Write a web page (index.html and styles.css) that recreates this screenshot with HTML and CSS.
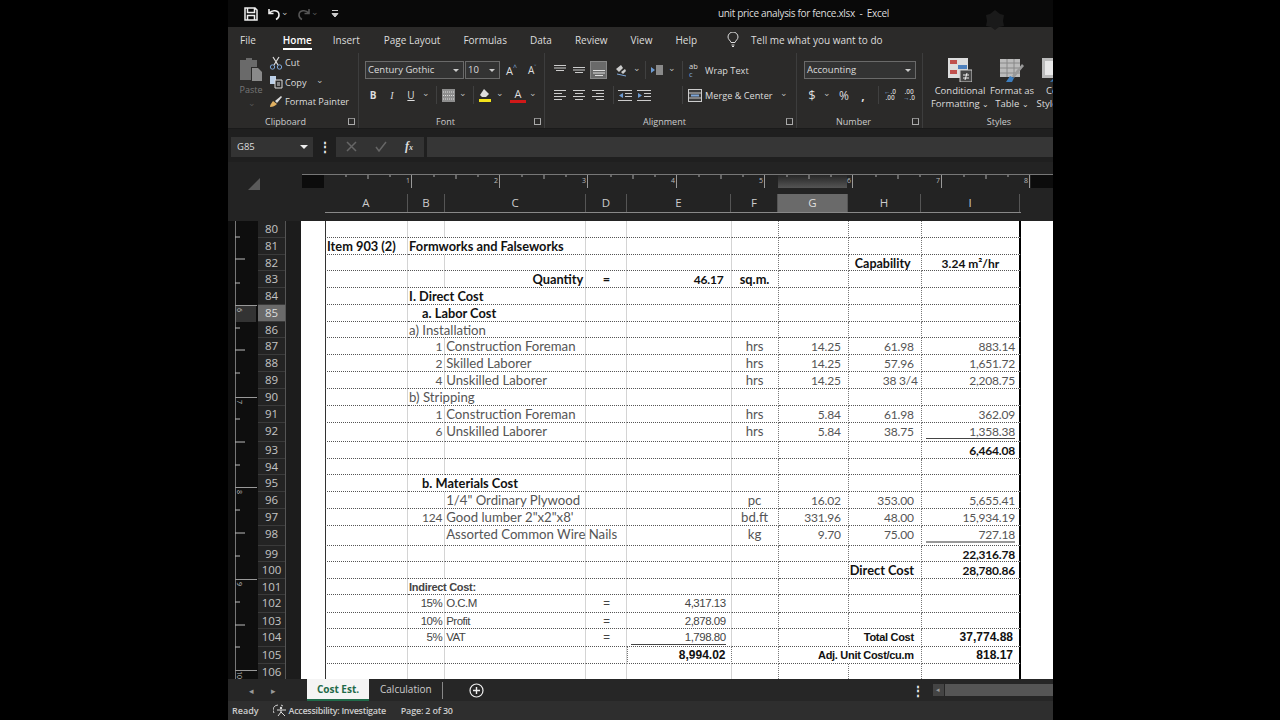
FILE: index.html
```html
<!DOCTYPE html>
<html lang="en">
<head>
    <meta charset="UTF-8">
    <title>unit price analysis for fence.xlsx - Excel</title>
    <link rel="stylesheet" href="styles.css">
</head>
<body>
<div class="window">

    <!-- TITLE BAR -->
    <header class="titlebar">
        <div class="qat">
            <svg class="qi" width="14" height="14" viewBox="0 0 14 14"><path d="M1 1h10l2 2v10H1z M3.500 1.500v4h7v-4 M3.500 13v-4.500h7V13" fill="none" stroke="#eee" stroke-width="1.500"/></svg>
            <svg class="qi undo" width="14" height="14" viewBox="0 0 14 14"><path d="M2 2v4.500h4.500 M2.500 6C5 2.500 12 3 12 8c0 2-1 3.500-3 4.500" fill="none" stroke="#eee" stroke-width="1.600"/></svg>
            <span class="chev">⌄</span>
            <svg class="qi redo" width="14" height="14" viewBox="0 0 14 14"><path d="M12 2v4.500H7.500 M11.500 6C9 2.500 2 3 2 8c0 2 1 3.500 3 4.500" fill="none" stroke="#555" stroke-width="1.600"/></svg>
            <span class="chev dim">⌄</span>
            <svg class="qi more" width="8" height="10" viewBox="0 0 8 10"><path d="M1 1.500h6 M1 4.500h6l-3 3.500z" stroke="#ccc" fill="#ccc"/></svg>
        </div>
        <div class="doc-title">unit price analysis for fence.xlsx&nbsp; - &nbsp;Excel</div>
        <svg class="faint" width="22" height="24" viewBox="0 0 22 24"><path d="M11 2l5 4 4 1-1 6 1 5-5 1-4 3-4-3-5-1 1-5-1-6 4-1z" fill="#1a1a1a"/></svg>
    </header>

    <!-- RIBBON TABS -->
    <nav class="tabs">
        <span>File</span>
        <span class="on">Home</span>
        <span class="ins">Insert</span>
        <span>Page Layout</span>
        <span>Formulas</span>
        <span>Data</span>
        <span>Review</span>
        <span>View</span>
        <span>Help</span>
        <svg class="bulb" width="12" height="15" viewBox="0 0 12 15"><path d="M4 10.500C3.500 8.500 1 7.500 1 5a5 5 0 0 1 10 0c0 2.500-2.500 3.500-3 5.500z M4.500 13h3 M5 14.500h2" fill="none" stroke="#ddd"/></svg>
        <span class="tell">Tell me what you want to do</span>
    </nav>

    <!-- RIBBON -->
    <section class="ribbon">
        <div class="group g-clip">
            <div class="body clip-body">
                <div class="paste">
                    <svg width="24" height="25" viewBox="0 0 24 25"><path d="M1 3h6V1h6v2h5v7h-6v13H1z" fill="#6a6a6a"/><path d="M13 11h6l4 4v9H13z" fill="#8a8a8a"/></svg>
                    <span>Paste</span>
                    <span class="chev dim">⌄</span>
                </div>
                <div class="clip-list">
                    <div class="clip-row">
                        <svg width="14" height="14" viewBox="0 0 14 14"><path d="M4 1l5 8 M10 1L5 9" stroke="#ddd" stroke-width="1.200"/><circle cx="3.500" cy="11" r="2.200" fill="none" stroke="#7ea6d8"/><circle cx="10.500" cy="11" r="2.200" fill="none" stroke="#7ea6d8"/></svg>
                        <span>Cut</span>
                    </div>
                    <div class="clip-row">
                        <svg width="14" height="14" viewBox="0 0 14 14"><path d="M1 1h6v8H1z" fill="#bcd0e8"/><path d="M6 5h7v8H6z" fill="#2b2b2b" stroke="#ddd"/><path d="M8 8h3 M8 10h3" stroke="#ddd"/></svg>
                        <span>Copy</span>
                        <span class="chev">⌄</span>
                    </div>
                    <div class="clip-row">
                        <svg width="14" height="14" viewBox="0 0 14 14"><path d="M1 12c0-3 2-4 3-6l4 3c-2 2-4 3-7 3z" fill="#e0b060"/><path d="M6 6l6-5 1 1-5 6z" fill="#ddd"/></svg>
                        <span>Format Painter</span>
                    </div>
                </div>
            </div>
            <div class="label">Clipboard<i class="launch"></i></div>
        </div>

        <div class="group g-font">
            <div class="body">
                <div class="row1">
                    <div class="combo w-font">Century Gothic<b></b></div>
                    <div class="combo w-size">10<b></b></div>
                    <span class="grow">A<sup>^</sup></span>
                    <span class="shrink">A<sup>˅</sup></span>
                </div>
                <div class="row2">
                    <span class="btn bold">B</span>
                    <span class="btn ital">I</span>
                    <span class="btn under">U</span>
                    <span class="chev">⌄</span>
                    <i class="sep"></i>
                    <span class="btn"><svg width="13" height="13" viewBox="0 0 13 13"><rect width="13" height="13" fill="#8e8e8e"/><path d="M1 3h11 M1 6.500h11 M1 10h11" stroke="#ddd" stroke-dasharray="1 1"/></svg></span>
                    <span class="chev">⌄</span>
                    <i class="sep"></i>
                    <span class="btn"><svg width="14" height="14" viewBox="0 0 14 14"><path d="M6 1l5 5-3 3H4L2 7z" fill="#ddd"/><rect x="1" y="11" width="12" height="3" fill="#f2e21b"/></svg></span>
                    <span class="chev">⌄</span>
                    <span class="btn color-a">A</span>
                    <span class="chev">⌄</span>
                </div>
            </div>
            <div class="label">Font<i class="launch"></i></div>
        </div>

        <div class="group g-align">
            <div class="body">
                <div class="row1 tight">
                    <span class="btn"><svg width="12" height="12" viewBox="0 0 12 12"><path d="M0 1.500h12 M0 4h12 M2 6.500h8" stroke="#ccc"/></svg></span>
                    <span class="btn"><svg width="12" height="12" viewBox="0 0 12 12"><path d="M0 3.500h12 M0 6h12 M2 8.500h8" stroke="#ccc"/></svg></span>
                    <span class="btn selected"><svg width="12" height="12" viewBox="0 0 12 12"><path d="M0 6.500h12 M0 9h12 M2 11.500h8" stroke="#ddd"/></svg></span>
                    <span class="btn orient"><svg width="14" height="13" viewBox="0 0 14 13"><path d="M1 5l5-4 2 3-4 4z M6 8l4-3 1 2-3 3z" fill="#ccc"/><path d="M2 10l9 2" stroke="#7ea6d8"/></svg></span>
                    <span class="chev">⌄</span>
                    <i class="sep s-a"></i>
                    <span class="btn"><svg width="12" height="10" viewBox="0 0 12 10"><path d="M0 2l4 3-4 3z" fill="#6d9bd1"/><path d="M5 0h7v10H5z" fill="#8a8a8a"/></svg></span>
                    <span class="chev">⌄</span>
                    <i class="sep s-b"></i>
                    <span class="btn wrap-ico"><em>ab</em><em>c</em></span>
                    <span class="al-text">Wrap Text</span>
                </div>
                <div class="row2 tight">
                    <span class="btn"><svg width="12" height="10" viewBox="0 0 12 10"><path d="M0 .5h12 M0 3.500h8 M0 6.500h12 M0 9.500h8" stroke="#ccc"/></svg></span>
                    <span class="btn"><svg width="12" height="10" viewBox="0 0 12 10"><path d="M0 .5h12 M2 3.500h8 M0 6.500h12 M2 9.500h8" stroke="#ccc"/></svg></span>
                    <span class="btn"><svg width="12" height="10" viewBox="0 0 12 10"><path d="M0 .5h12 M4 3.500h8 M0 6.500h12 M4 9.500h8" stroke="#ccc"/></svg></span>
                    <i class="sep"></i>
                    <span class="btn"><svg width="14" height="11" viewBox="0 0 14 11"><path d="M0 .5h14 M7 3.500h7 M7 6.500h7 M0 10.500h14" stroke="#ccc"/><path d="M5 3v5L1 5.500z" fill="#6d9bd1"/></svg></span>
                    <span class="btn"><svg width="14" height="11" viewBox="0 0 14 11"><path d="M0 .5h14 M7 3.500h7 M7 6.500h7 M0 10.500h14" stroke="#ccc"/><path d="M1 3v5l4-2.500z" fill="#6d9bd1"/></svg></span>
                    <i class="sep s-c"></i>
                    <span class="btn"><svg width="14" height="13" viewBox="0 0 14 13"><rect x=".5" y=".5" width="13" height="12" fill="#3b3b3b" stroke="#ccc"/><path d="M0 4h14 M0 9h14" stroke="#ccc"/><path d="M3 6.500h8" stroke="#7ea6d8" stroke-width="2"/></svg></span>
                    <span class="al-text">Merge &amp; Center</span>
                    <span class="chev c-m">⌄</span>
                </div>
            </div>
            <div class="label">Alignment<i class="launch"></i></div>
        </div>

        <div class="group g-num">
            <div class="body">
                <div class="row1"><div class="combo w-num">Accounting<b></b></div></div>
                <div class="row2 tight">
                    <span class="btn dollar">$</span>
                    <span class="chev">⌄</span>
                    <span class="btn pct">%</span>
                    <span class="btn comma">,</span>
                    <i class="sep"></i>
                    <span class="btn dec"><em><u>←</u>.0</em><em>.00</em></span>
                    <span class="btn dec"><em>.00</em><em><u>→</u>.0</em></span>
                </div>
            </div>
            <div class="label">Number<i class="launch"></i></div>
        </div>

        <div class="group g-styles">
            <div class="body style-body">
                <div class="style-col c1">
                    <svg width="24" height="24" viewBox="0 0 24 24"><rect width="20" height="20" fill="#ddd"/><path d="M2 2h7v4H2z" fill="#c0504d"/><path d="M10 7h9v4h-9z" fill="#4f81bd"/><path d="M2 12h7v4H2z" fill="#c0504d"/><rect x="12" y="12" width="12" height="12" fill="#444" stroke="#ccc"/><path d="M15 17h6 M15 20h6 M19 15l-2 7" stroke="#eee"/></svg>
                    <span>Conditional</span>
                    <span>Formatting <i class="mini">⌄</i></span>
                </div>
                <div class="style-col c2">
                    <svg width="24" height="24" viewBox="0 0 24 24"><rect y="1" width="20" height="18" fill="#bbb"/><path d="M0 5h20 M0 10h20 M0 15h20 M7 1v18 M14 1v18" stroke="#888"/><path d="M12 18l10-12 2 2-10 12z" fill="#999"/><path d="M10 18l4 2-2 4h-6z" fill="#3d7ebf"/></svg>
                    <span>Format as</span>
                    <span>Table <i class="mini">⌄</i></span>
                </div>
                <div class="style-col c3">
                    <svg width="24" height="24" viewBox="0 0 24 24"><rect width="20" height="20" fill="#bbb"/><rect x="3" y="3" width="14" height="14" fill="#e8e8e8"/><path d="M8 24l6-6 4 4z" fill="#3d7ebf"/></svg>
                    <span>Cell</span>
                    <span>Styles <i class="mini">⌄</i></span>
                </div>
            </div>
            <div class="label">Styles</div>
        </div>
    </section>

    <!-- FORMULA BAR -->
    <div class="formula">
        <div class="namebox">G85<b></b></div>
        <span class="dots">⋮</span>
        <div class="fx-box">
            <svg width="11" height="11" viewBox="0 0 11 11"><path d="M1 1l9 9 M10 1l-9 9" stroke="#666" stroke-width="1.500"/></svg>
            <svg width="12" height="11" viewBox="0 0 12 11"><path d="M1 6l3 4 7-9" fill="none" stroke="#666" stroke-width="1.500"/></svg>
            <span class="fx">f<small>x</small></span>
        </div>
        <div class="input"></div>
    </div>

    <!-- RULER + COLUMN HEADERS -->
    <div class="sheet-head">
        <div class="corner"><i></i></div>
        <div class="head-right">
            <svg class="ruler" width="751" height="16" viewBox="0 0 751 16">
                <defs><linearGradient id="rulerSel" x1="0" y1="0" x2="0" y2="1"><stop offset="0" stop-color="#262626"/><stop offset="1" stop-color="#555"/></linearGradient></defs>
                <rect x="0" y="2" width="22" height="13" fill="#0c0c0c"/>
                <rect x="729" y="2" width="22" height="13" fill="#0c0c0c"/>
                <rect x="476" y="2" width="69" height="13" fill="url(#rulerSel)"/>
                <path d="M0 1.500h751" stroke="#777"/>
                <path d="M44 2v2M66 2v4M88 2v2M132 2v2M154 2v4M176 2v2M220 2v2M242 2v4M264 2v2M309 2v2M331 2v4M353 2v2M397 2v2M419 2v4M441 2v2M485 2v2M507 2v4M529 2v2M574 2v2M596 2v4M618 2v2M662 2v2M684 2v4M706 2v2" stroke="#aaa"/>
                <path d="M109.500 2v13M197.500 2v13M285.500 2v13M374.500 2v13M462.500 2v13M550.500 2v13M639.500 2v13M727.500 2v13" stroke="#999"/>
                <g class="rnum">
                    <text x="104" y="10">1</text><text x="192" y="10">2</text><text x="280" y="10">3</text><text x="369" y="10">4</text>
                    <text x="457" y="10">5</text><text x="545" y="10">6</text><text x="634" y="10">7</text><text x="722" y="10">8</text>
                </g>
            </svg>
            <div class="colheads">
                <span class="a">A</span><span class="b">B</span><span class="c">C</span><span class="d">D</span><span class="e">E</span><span class="f">F</span><span class="g selected">G</span><span class="h">H</span><span class="i">I</span>
            </div>
        </div>
    </div>

    <!-- SHEET -->
    <div class="sheet">
        <svg class="vruler" width="30" height="458" viewBox="0 0 30 458">
            <path d="M7.500 0v458" stroke="#777"/>
            <path d="M7 16h5M7 62h5M7 107h5M7 152h5M7 198h5M7 244h5M7 289h5M7 335h5M7 381h5M7 426h5" stroke="#bbb"/>
            <path d="M7 38h10M7 129h10M7 221h10M7 312h10M7 404h10" stroke="#bbb"/>
            <path d="M7 84.500h22M7 176.500h22M7 266.500h22M7 358.500h22M7 449.500h22" stroke="#999"/>
            <rect x="8" y="85" width="20" height="16" fill="#333"/>
            <g class="rnum">
                <text transform="translate(9 87) rotate(90)">6</text>
                <text transform="translate(9 179) rotate(90)">7</text>
                <text transform="translate(9 269) rotate(90)">8</text>
                <text transform="translate(9 361) rotate(90)">9</text>
                <text transform="translate(9 450) rotate(90)">10</text>
            </g>
        </svg>
        <div class="rowheads">
            <div class="h17">80</div><div class="h17">81</div><div class="h16">82</div><div class="h17">83</div><div class="h17">84</div>
            <div class="h17 selected">85</div><div class="h16">86</div><div class="h17">87</div><div class="h17">88</div><div class="h17">89</div>
            <div class="h17">90</div><div class="h17">91</div><div class="h19">92</div><div class="h17">93</div><div class="h16">94</div>
            <div class="h17">95</div><div class="h17">96</div><div class="h17">97</div><div class="h20">98</div><div class="h16">99</div>
            <div class="h17">100</div><div class="h16">101</div><div class="h18">102</div><div class="h16">103</div><div class="h18">104</div>
            <div class="h17">105</div><div class="h17">106</div>
        </div>
        <div class="page">
            <table class="grid">
                <colgroup>
                    <col class="a"><col class="b"><col class="c"><col class="d"><col class="e"><col class="f"><col class="g"><col class="h"><col class="i">
                </colgroup>
                <tr class="h17"><td></td><td></td><td></td><td></td><td></td><td></td><td></td><td></td><td></td></tr>
                <tr class="h17 strong"><td class="pl">Item 903 (2)</td><td colspan="2" class="pl">Formworks and Falseworks</td><td></td><td></td><td></td><td></td><td></td><td></td></tr>
                <tr class="h16 strong"><td></td><td></td><td></td><td></td><td></td><td></td><td></td><td class="ctr cap">Capability</td><td class="ctr dig">3.24 m²/hr</td></tr>
                <tr class="h17 strong"><td></td><td></td><td class="txt q">Quantity</td><td class="ctr">=</td><td class="num">46.17</td><td class="ctr">sq.m.</td><td></td><td></td><td></td></tr>
                <tr class="h17 strong"><td></td><td colspan="2" class="pl">I. Direct Cost</td><td></td><td></td><td></td><td></td><td></td><td></td></tr>
                <tr class="h17 strong"><td></td><td colspan="2" class="ind">a. Labor Cost</td><td></td><td></td><td></td><td></td><td></td><td></td></tr>
                <tr class="h16"><td></td><td colspan="2" class="pl">a) Installation</td><td></td><td></td><td></td><td></td><td></td><td></td></tr>
                <tr class="h17"><td></td><td class="num">1</td><td class="pl">Construction Foreman</td><td></td><td></td><td class="ctr">hrs</td><td class="num">14.25</td><td class="num">61.98</td><td class="num">883.14</td></tr>
                <tr class="h17"><td></td><td class="num">2</td><td class="pl">Skilled Laborer</td><td></td><td></td><td class="ctr">hrs</td><td class="num">14.25</td><td class="num">57.96</td><td class="num">1,651.72</td></tr>
                <tr class="h17"><td></td><td class="num">4</td><td class="pl">Unskilled Laborer</td><td></td><td></td><td class="ctr">hrs</td><td class="num">14.25</td><td class="num tiny-pad">38 3/4</td><td class="num">2,208.75</td></tr>
                <tr class="h17"><td></td><td colspan="2" class="pl">b) Stripping</td><td></td><td></td><td></td><td></td><td></td><td></td></tr>
                <tr class="h17"><td></td><td class="num">1</td><td class="pl">Construction Foreman</td><td></td><td></td><td class="ctr">hrs</td><td class="num">5.84</td><td class="num">61.98</td><td class="num">362.09</td></tr>
                <tr class="h19"><td></td><td class="num">6</td><td class="pl">Unskilled Laborer</td><td></td><td></td><td class="ctr">hrs</td><td class="num">5.84</td><td class="num">38.75</td><td class="num"><span class="ul">1,358.38</span></td></tr>
                <tr class="h17 strong"><td></td><td></td><td></td><td></td><td></td><td></td><td></td><td></td><td class="num">6,464.08</td></tr>
                <tr class="h16"><td></td><td></td><td></td><td></td><td></td><td></td><td></td><td></td><td></td></tr>
                <tr class="h17 strong"><td></td><td colspan="2" class="ind">b. Materials Cost</td><td></td><td></td><td></td><td></td><td></td><td></td></tr>
                <tr class="h17"><td></td><td></td><td class="pl">1/4" Ordinary Plywood</td><td></td><td></td><td class="ctr">pc</td><td class="num">16.02</td><td class="num">353.00</td><td class="num">5,655.41</td></tr>
                <tr class="h17"><td></td><td class="num">124</td><td class="pl">Good lumber 2"x2"x8'</td><td></td><td></td><td class="ctr">bd.ft</td><td class="num">331.96</td><td class="num">48.00</td><td class="num">15,934.19</td></tr>
                <tr class="h20"><td></td><td></td><td class="pl">Assorted Common Wire Nails</td><td></td><td></td><td class="ctr">kg</td><td class="num">9.70</td><td class="num">75.00</td><td class="num"><span class="ul thick">727.18</span></td></tr>
                <tr class="h16 strong"><td></td><td></td><td></td><td></td><td></td><td></td><td></td><td></td><td class="num">22,316.78</td></tr>
                <tr class="h17 strong"><td></td><td></td><td></td><td></td><td></td><td></td><td></td><td class="txt">Direct Cost</td><td class="num">28,780.86</td></tr>
                <tr class="h16 arial strong"><td></td><td colspan="2" class="pl">Indirect Cost:</td><td></td><td></td><td></td><td></td><td></td><td></td></tr>
                <tr class="h18 arial"><td></td><td class="num">15%</td><td class="pl">O.C.M</td><td class="ctr">=</td><td class="num">4,317.13</td><td></td><td></td><td></td><td></td></tr>
                <tr class="h16 arial"><td></td><td class="num">10%</td><td class="pl">Profit</td><td class="ctr">=</td><td class="num">2,878.09</td><td></td><td></td><td></td><td></td></tr>
                <tr class="h18 arial"><td></td><td class="num">5%</td><td class="pl">VAT</td><td class="ctr">=</td><td class="num"><span class="ul">1,798.80</span></td><td></td><td></td><td class="txt strong-cell">Total Cost</td><td class="num big">37,774.88</td></tr>
                <tr class="h17 arial"><td></td><td></td><td></td><td></td><td class="num big dotted-left">8,994.02</td><td></td><td colspan="2" class="txt strong-cell">Adj. Unit Cost/cu.m</td><td class="num big">818.17</td></tr>
                <tr class="h17"><td></td><td></td><td></td><td></td><td></td><td></td><td></td><td></td><td></td></tr>
            </table>
        </div>
    </div>

    <!-- SHEET TABS -->
    <div class="sheet-tabs">
        <span class="arrow">◂</span>
        <span class="arrow">▸</span>
        <div class="tab active">Cost Est.</div>
        <div class="tab">Calculation</div>
        <i class="tab-sep"></i>
        <svg class="add" width="15" height="15" viewBox="0 0 15 15"><circle cx="7.500" cy="7.500" r="6.500" fill="none" stroke="#eee" stroke-width="1.200"/><path d="M7.500 4v7M4 7.500h7" stroke="#eee" stroke-width="1.400"/></svg>
        <span class="dots right">⋮</span>
        <div class="hscroll"><span>◂</span><i></i></div>
    </div>

    <!-- STATUS BAR -->
    <footer class="status">
        <span>Ready</span>
        <svg class="acc" width="14" height="13" viewBox="0 0 14 13"><path d="M5 1a5 5 0 0 0-4 8 M8 1l2 1" fill="none" stroke="#ccc"/><circle cx="8" cy="4" r="1.200" fill="#ddd"/><path d="M4 6h9 M8 6v2l-3 4 M8 8l4 4" fill="none" stroke="#ddd"/></svg>
        <span class="acc-text">Accessibility: Investigate</span>
        <span class="pg">Page: 2 of 30</span>
    </footer>
</div>
</body>
</html>
```

FILE: styles.css
```css
* { margin: 0; padding: 0; box-sizing: border-box; }
html, body { height: 100%; }
body {
    background: #000;
    font-family: "Open Sans", "Noto Sans", sans-serif;
    color: #ddd;
    overflow: hidden;
}
.window {
    width: 825px;
    height: 720px;
    margin-left: 228px;
    background: #232323;
    overflow: hidden;
    display: flex;
    flex-direction: column;
}
i, em { font-style: normal; }

/* title bar */
.titlebar { height: 27px; background: #090909; display: flex; align-items: center; position: relative; flex: none; }
.qat { display: flex; align-items: center; padding-left: 16px; }
.qi { display: block; }
.undo { margin-left: 9px; }
.redo { margin-left: 9px; }
.more { margin-left: 13px; }
.doc-title { position: absolute; left: 490px; top: 6px; font-size: 10px; letter-spacing: -.33px; color: #ddd; white-space: nowrap; }
.faint { position: absolute; left: 756px; top: 8px; }
.chev { font-size: 9px; line-height: 10px; width: 7px; text-align: center; color: #bbb; display: inline-block; margin-top: -4px; }
.chev.dim { color: #555; }

/* tabs */
.tabs { height: 25px; background: #2b2a29; display: flex; align-items: center; padding-left: 12px; gap: 23px; font-size: 10px; color: #ddd; flex: none; white-space: nowrap; }
.tabs span { position: relative; }
.tabs .on { color: #fff; font-weight: 600; margin: 0 -2px 0 4px; }
.tabs .on::after { content: ""; position: absolute; left: 0; right: 0; bottom: -3px; height: 2px; background: #fff; }
.tabs .ins { margin-right: 1px; }
.bulb { margin-left: 7px; }
.tell { margin-left: -11px; }

/* ribbon */
.ribbon { height: 77px; background: #2b2a29; display: flex; flex: none; font-size: 9.2px; white-space: nowrap; border-bottom: 1px solid #1a1a1a; }
.group { display: flex; flex-direction: column; border-right: 1px solid #3d3d3d; margin: 1px 0 0; flex: none; }
.g-clip { width: 131px; }
.g-font { width: 186px; padding-left: 6px; }
.g-align { width: 252px; padding-left: 7px; }
.g-num { width: 126px; padding-left: 7px; }
.g-styles { width: 130px; border-right: 0; }
.body { height: 62px; padding-top: 8px; }
.label { height: 14px; position: relative; text-align: center; font-size: 9px; color: #ccc; line-height: 15px; }
.g-clip .label { padding-right: 15px; }
.g-font .label { padding-right: 18px; }
.g-align .label { padding-right: 19px; }
.g-num .label { padding-right: 19px; }
.g-styles .label { padding-left: 22px; }
.launch { position: absolute; right: 3px; top: 4px; width: 7px; height: 7px; border: 1px solid #aaa; border-top-color: #888; }

.clip-body { display: flex; padding: 4px 0 0 11px; }
.paste { width: 24px; display: flex; flex-direction: column; align-items: center; color: #777; font-size: 9px; line-height: 12px; }
.paste svg { margin-bottom: 2px; }
.paste .chev { margin-top: 2px; }
.clip-list { margin-left: 6px; margin-top: -4px; }
.clip-row { height: 19.5px; display: flex; align-items: center; gap: 2px; font-size: 9.2px; color: #ddd; }
.clip-row .chev { margin-left: 7px; }

.row1, .row2 { display: flex; align-items: center; gap: 3px; height: 18px; }
.row2 { margin-top: 7px; }
.combo { height: 18px; border: 1px solid #6a6a6a; background: #333; padding-left: 2px; line-height: 16px; font-size: 9.5px; position: relative; color: #ddd; flex: none; }
.combo b, .namebox b { position: absolute; right: 4px; top: 7px; border: 3px solid transparent; border-top-color: #ccc; border-bottom: 0; }
.w-font { width: 99px; }
.w-size { width: 35px; margin-left: -2px; }
.w-num { width: 112px; }
.grow, .shrink { font-size: 11px; margin-left: 3px; width: 16px; color: #ddd; }
.shrink { font-size: 10px; }
sup { font-size: 7px; color: #7ea6d8; line-height: 0; }

.btn { width: 16px; height: 18px; display: flex; align-items: center; justify-content: center; flex: none; font-size: 10px; color: #ddd; }
.bold { font-weight: 700; }
.ital { font-style: italic; font-family: "Liberation Serif", serif; }
.under { text-decoration: underline; }
.sep { width: 1px; height: 18px; background: #404040; margin: 0 0 0 4px; flex: none; }
.selected.btn { width: 17px; background: #6a6a6a; border: 1px solid #888; }
.orient { margin-left: 4px; }
.s-a { margin-left: 2px; }
.s-b { margin-left: 4px; margin-right: 1px; }
.s-c { margin-left: 27px; margin-right: 1px; }
.al-text { font-size: 9.2px; margin-left: -1px; }
.wrap-ico { flex-direction: column; font-size: 7.500px; line-height: 8px; align-items: flex-start; padding-left: 2px; }
.wrap-ico em:last-child { color: #7ea6d8; }
.c-m { margin-left: 4px; }
.color-a { margin-left: 4px; font-size: 11px; border-bottom: 3px solid #d01818; height: 15px; }
.dollar { font-size: 13px; }
.pct { font-size: 12px; margin-left: 3px; }
.comma { font-size: 12px; font-weight: 700; }
.dec { flex-direction: column; font-size: 6.500px; line-height: 6.500px; color: #ccc; font-weight: 600; }
.dec u { color: #7ea6d8; text-decoration: none; }

.style-body { display: flex; padding: 5px 0 0 7px; }
.style-col { display: flex; flex-direction: column; align-items: center; font-size: 9.500px; line-height: 13px; flex: none; }
.style-col svg { margin-bottom: 2px; }
.c1 { width: 60px; }
.c2 { width: 44px; }
.c3 { width: 40px; }
.mini { font-size: 8px; }

/* formula bar */
.formula { height: 33px; flex: none; background: #1f1f1f; display: flex; align-items: center; padding-left: 3px; padding-top: 2px; }
.namebox { width: 82px; height: 20px; background: #333; position: relative; font-size: 9.5px; line-height: 20px; padding-left: 6px; color: #ddd; }
.namebox b { right: 5px; top: 8px; border-width: 4px; border-bottom: 0; border-top-color: #eee; }
.dots { width: 23px; text-align: center; font-weight: 700; font-size: 12px; color: #eee; }
.fx-box { width: 88px; height: 20px; background: #333; display: flex; align-items: center; gap: 18px; padding-left: 10px; }
.fx { font-family: "Liberation Serif", serif; font-style: italic; font-weight: 700; font-size: 12px; color: #ddd; }
.fx small { font-size: 8px; }
.input { flex: 1; height: 20px; background: #363636; margin-left: 3px; }

/* sheet head */
.sheet-head { height: 59px; flex: none; display: flex; background: #232323; }
.corner { width: 74px; padding: 16px 0 0 20px; }
.corner i { display: block; width: 0; height: 0; border-left: 12px solid transparent; border-bottom: 12px solid #5a5a5a; }
.head-right { flex: 1; padding-top: 11px; }
.ruler { display: block; }
.rnum { fill: #bbb; font-size: 7px; font-family: "Open Sans", sans-serif; }
.colheads { display: flex; height: 19px; margin: 5px 0 0 23px; width: 696px; border-bottom: 1px solid #888; font-size: 11.5px; color: #ccc; line-height: 17px; text-align: center; }
.colheads span { border-right: 1px solid #555; flex: none; }
.colheads .selected { background: #6a6a6a; color: #ddd; }
.a { width: 83px; }
.b { width: 37px; }
.c { width: 141px; }
.d { width: 41px; }
.e { width: 104px; }
.f { width: 47px; }
.g { width: 70px; }
.h { width: 73px; }
.i { width: 99px; }

/* sheet */
.sheet { height: 458px; flex: none; display: flex; overflow: hidden; background: #1c1c1c; }
.vruler { flex: none; background: #0e0e0e; display: block; }
.rowheads { width: 28px; flex: none; background: #232323; border-right: 1px solid #555; font-size: 11.5px; color: #c4c4c4; text-align: center; }
.rowheads div { line-height: 16px; border-bottom: 1px solid #3a3a3a; overflow: hidden; }
.rowheads .selected { background: #6a6a6a; color: #ddd; }
.h16 { height: 16px; }
.h17 { height: 17px; }
.h18 { height: 18px; }
.h19 { height: 19px; }
.h20 { height: 20px; }
.page { margin-left: 15px; flex: 1; background: #fff; padding-left: 24px; }
.grid { border-collapse: separate; border-spacing: 0; table-layout: fixed; width: 696px; font-family: Lato, sans-serif; font-size: 13.2px; color: #555; }
.grid td {
    padding: 2px 7px 0 1px;
    line-height: 13px;
    vertical-align: top;
    white-space: nowrap;
    border-bottom: 1px dotted #555;
    border-right: 1px solid #d4d4d4;
}
.grid td:first-child { border-left: 1px solid #333; }
.grid td:nth-last-child(-n+4) { border-right: 1px dotted #777; }
.grid td:last-child { border-right: 2px solid #000; }
.strong td { font-weight: 700; color: #111; font-size: 12.8px; }
.grid .ind { padding-left: 14px; }
.grid .num { text-align: right; font-size: 12px; letter-spacing: -.2px; }
.grid .txt { text-align: right; }
.grid .q { padding-right: 2px; }
.grid .ctr { text-align: center; padding-left: 0; padding-right: 0; }
.grid .cap { padding-right: 4px; font-size: 12.5px; }
.grid .dig { font-size: 12px; }
.grid .tiny-pad { padding-right: 3px; }
.grid td:nth-child(2).num { padding-right: 2px; }
.grid td:last-child.num { padding-right: 4px; }
.ul { display: block; border-bottom: 1px solid #444; margin-left: 3px; }
.ul.thick { border-bottom: 2px solid #999; }
.arial td { font-family: "Liberation Sans", Arial, sans-serif; font-size: 11.500px; letter-spacing: -.5px; color: #444; }
.grid .arial .num, .grid .arial .txt { font-size: 11.500px; letter-spacing: -.5px; }
.grid .arial td:nth-child(5).num { padding-right: 5px; }
.arial.strong td { font-size: 11px; letter-spacing: -.3px; }
.grid .arial .strong-cell { font-weight: 700; color: #111; font-size: 11px; letter-spacing: -.3px; }
.grid .arial td.big { font-size: 12px; font-weight: 700; color: #111; letter-spacing: 0; padding-right: 6px; }
.grid .dotted-left { border-left: 1px dotted #777; }

/* sheet tabs */
.sheet-tabs { height: 22px; flex: none; background: #262626; display: flex; align-items: center; position: relative; }
.arrow { width: 22px; text-align: center; font-size: 9px; color: #999; }
.arrow:first-child { margin-left: 12px; }
.tab { height: 22px; line-height: 21px; font-size: 10px; padding: 0 11px; color: #ccc; }
.tab.active { margin-left: 23px; width: 62px; padding: 0; text-align: center; background: #f4f4f4; color: #1f6b4a; font-weight: 700; border-bottom: 2px solid #1f6b4a; }
.tab-sep { width: 1px; height: 17px; background: #888; margin-left: -1px; }
.add { margin-left: 26px; }
.dots.right { margin-left: 423px; }
.hscroll { flex: 1; height: 12px; margin-left: 3px; display: flex; font-size: 7px; color: #999; line-height: 12px; }
.hscroll span { width: 11px; background: #444; text-align: center; }
.hscroll i { flex: 1; background: #555; margin-left: 1px; }

/* status bar */
.status { height: 19px; flex: none; background: #2e2e2e; display: flex; align-items: center; padding-left: 4px; font-size: 9px; font-weight: 600; color: #ccc; white-space: nowrap; }
.acc { margin-left: 14px; margin-right: 2px; }
.acc-text { letter-spacing: -.32px; }
.pg { margin-left: 15px; letter-spacing: -.2px; }
```
